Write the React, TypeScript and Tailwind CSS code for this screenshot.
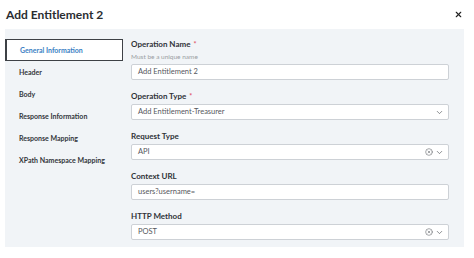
import { X, ChevronDown, CircleX } from "lucide-react";

const navItems = [
  "General Information",
  "Header",
  "Body",
  "Response Information",
  "Response Mapping",
  "XPath Namespace Mapping",
];

const Label = ({ text, required }: { text: string; required?: boolean }) => (
  <div className="text-[8px] leading-[12px] font-bold text-[#2f3237]">
    {text}
    {required && <span className="ml-[3px] text-[7px] text-[#e0566a]">*</span>}
  </div>
);

const TextInput = ({ value }: { value: string }) => (
  <div className="mt-[2px] h-4 flex items-center rounded-[2px] border border-[#cdd1d6] bg-white px-[6px] text-[7.5px] text-[#55585d]">
    {value}
  </div>
);

const SelectInput = ({ value, clearable }: { value: string; clearable?: boolean }) => (
  <div className="mt-[2px] h-4 flex items-center justify-between rounded-[2px] border border-[#cdd1d6] bg-white pl-[6px] pr-[4px] text-[7.5px] text-[#55585d]">
    <span>{value}</span>
    <div className="flex items-center gap-[2px] text-[#55595e]">
      {clearable && <CircleX size={8} strokeWidth={1.6} />}
      <ChevronDown size={9} strokeWidth={1.8} />
    </div>
  </div>
);

export default function App() {
  return (
    <div className="w-[474px] h-[258px] bg-white font-['Lato',sans-serif] overflow-hidden">
      <div className="flex items-center justify-between h-[29px] pl-[6px] pr-[11px]">
        <h1 className="text-[12px] font-bold text-[#2a2d31]">Add Entitlement 2</h1>
        <X size={9} strokeWidth={3} className="text-[#222]" />
      </div>

      <div className="ml-[5px] w-[459px] h-[218px] bg-[#f1f4f7] flex">
        {/* side nav */}
        <div className="w-[118px] pt-[10px] flex flex-col">
          {navItems.map((item, i) => (
            <div
              key={item}
              className={
                i === 0
                  ? "h-[22px] flex items-center pl-[13px] bg-white border border-[#3e4146] border-l-2 text-[7px] font-bold text-[#3b7fc4]"
                  : "h-[22px] flex items-center pl-[14px] text-[7px] font-bold text-[#33363b]"
              }
            >
              {item}
            </div>
          ))}
        </div>

        {/* form */}
        <div className="ml-[8px] w-[318px] pt-[9px] flex flex-col gap-[10px]">
          <div>
            <Label text="Operation Name" required />
            <div className="mt-[2px] mb-[1px] text-[6.5px] leading-[10px] text-[#9a9ea3]">Must be a unique name</div>
            <TextInput value="Add Entitlement 2" />
          </div>
          <div>
            <Label text="Operation Type" required />
            <SelectInput value="Add Entitlement-Treasurer" />
          </div>
          <div>
            <Label text="Request Type" />
            <SelectInput value="API" clearable />
          </div>
          <div>
            <Label text="Context URL" />
            <TextInput value="users?username=" />
          </div>
          <div>
            <Label text="HTTP Method" />
            <SelectInput value="POST" clearable />
          </div>
        </div>
      </div>
    </div>
  );
}
